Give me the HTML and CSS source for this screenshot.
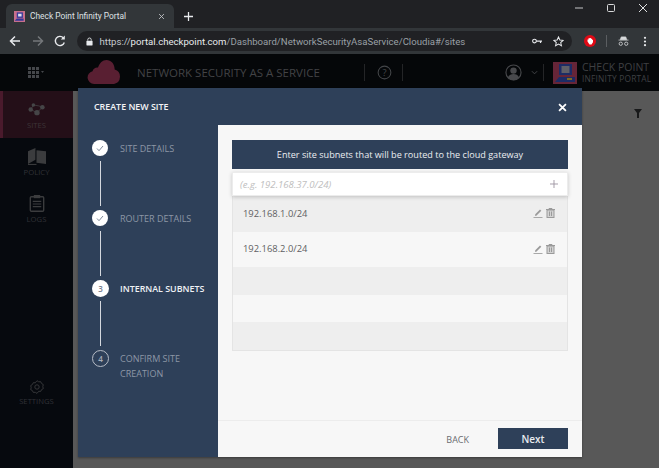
FILE: index.html
```html
<!DOCTYPE html>
<html lang="en">
<head>
<meta charset="utf-8">
<title>Check Point Infinity Portal</title>
<link rel="stylesheet" href="styles.css">
</head>
<body>
<div class="browser">
  <div class="tabstrip">
    <div class="tab">
      <svg class="favicon" viewBox="0 0 16 16"><rect width="16" height="16" fill="#c8708c"/><rect x="4" y="2" width="9" height="8" fill="#3a3c9c"/><rect x="6" y="4" width="5" height="4" fill="#dfe0ee"/><path d="M1 14l3-3h10v3z" fill="#33359a"/></svg>
      <span class="tab-title">Check Point Infinity Portal</span>
      <svg class="tab-close" viewBox="0 0 10 10"><path d="M1.500 1.500l7 7M8.500 1.500l-7 7" stroke="#bfc1c4" stroke-width="1.300"/></svg>
    </div>
    <svg class="newtab" viewBox="0 0 10 10"><path d="M5 0v10M0 5h10" stroke="#e8eaed" stroke-width="1.400"/></svg>
    <div class="winctrls">
      <svg viewBox="0 0 10 10"><path d="M1 5h8" stroke="#c4c6c8" stroke-width="1"/></svg>
      <svg viewBox="0 0 10 10"><rect x="1.500" y="1.500" width="7" height="7" rx="1" fill="none" stroke="#d8d9da" stroke-width="1"/></svg>
      <svg viewBox="0 0 10 10"><path d="M1 1l8 8M9 1l-8 8" stroke="#e0e1e2" stroke-width="1"/></svg>
    </div>
  </div>
  <div class="toolbar">
    <svg class="nav" viewBox="0 0 12 12"><path d="M11 6H2M6 1.500L1.500 6 6 10.500" fill="none" stroke="#e8eaed" stroke-width="1.500"/></svg>
    <svg class="nav" viewBox="0 0 12 12"><path d="M1 6h9M6 1.500L10.500 6 6 10.500" fill="none" stroke="#74777a" stroke-width="1.500"/></svg>
    <svg class="nav" viewBox="0 0 12 12"><path d="M10.300 7.500A4.600 4.600 0 1 1 9.300 2.800" fill="none" stroke="#e8eaed" stroke-width="1.400"/><path d="M10.800 0.500v4h-4z" fill="#e8eaed"/></svg>
    <div class="omnibox">
      <svg class="lock" viewBox="0 0 8 10"><path d="M2 4V3a2 2 0 0 1 4 0v1" fill="none" stroke="#e8eaed" stroke-width="1"/><rect x="0.500" y="4" width="7" height="5.500" rx="0.500" fill="#e8eaed"/></svg>
      <span class="url"><span class="url-dim">https://</span><span class="url-host">portal.checkpoint.com</span><span class="url-dim">/Dashboard/NetworkSecurityAsaService/Cloudia#/sites</span></span>
      <svg class="key" viewBox="0 0 12 7"><circle cx="3" cy="3.500" r="2.200" fill="none" stroke="#e8eaed" stroke-width="1.300"/><path d="M5 3h7v1.500h-1V6H9.500V4.500H5z" fill="#e8eaed"/></svg>
      <svg class="star" viewBox="0 0 12 12"><path d="M6 1l1.500 3.300 3.600.4-2.700 2.400.8 3.500L6 8.800l-3.200 1.800.8-3.500L.9 4.700l3.600-.4z" fill="none" stroke="#e8eaed" stroke-width="1.100"/></svg>
    </div>
    <svg class="ext" viewBox="0 0 12 12"><circle cx="6" cy="6" r="6" fill="#e00a16"/><path d="M3.500 6.500V4.500h1V3.200h1.200V3h1.200v.8H8v1h1v2.500L7.500 9.500h-2z" fill="#fff"/></svg>
    <span class="tb-sep"></span>
    <svg class="incog" viewBox="0 0 12 11"><path d="M2.500 4l1-3h5l1 3zM0.500 4.500h11" fill="#d6d8da" stroke="#d6d8da" stroke-width="0.800"/><circle cx="3" cy="8.500" r="1.800" fill="none" stroke="#d6d8da" stroke-width="0.900"/><circle cx="9" cy="8.500" r="1.800" fill="none" stroke="#d6d8da" stroke-width="0.900"/></svg>
    <svg class="menu" viewBox="0 0 4 12"><circle cx="2" cy="2" r="1.200" fill="#e8eaed"/><circle cx="2" cy="6" r="1.200" fill="#e8eaed"/><circle cx="2" cy="10" r="1.200" fill="#e8eaed"/></svg>
  </div>
</div>

<div class="app">
  <header class="app-header">
    <div class="apps">
      <svg class="apps-icon" viewBox="0 0 17 11"><g fill="#45474b"><rect width="3" height="3"/><rect x="4" width="3" height="3"/><rect x="8" width="3" height="3"/><rect y="4" width="3" height="3"/><rect x="4" y="4" width="3" height="3"/><rect x="8" y="4" width="3" height="3"/><rect y="8" width="3" height="3"/><rect x="4" y="8" width="3" height="3"/><rect x="8" y="8" width="3" height="3"/><path d="M13 4h3l-1.500 2z"/></g></svg>
    </div>
    <svg class="cloud" viewBox="0 0 34 24"><path d="M7 24a6.500 6.500 0 0 1-1.500-12.800C6.500 8 9 7 11 7.500 12.500 3 15.500 0 19.500 0c4.500 0 8 3.500 8.200 9.500A7.500 7.500 0 0 1 27 24z" fill="#591f32"/></svg>
    <span class="product">NETWORK SECURITY AS A SERVICE</span>
    <span class="h-sep h-sep-a"></span>
    <svg class="help" viewBox="0 0 16 16"><circle cx="8" cy="8" r="6.800" fill="none" stroke="#45474a" stroke-width="1.100"/><text x="8" y="11.500" text-anchor="middle" class="help-q">?</text></svg>
    <span class="h-sep"></span>
    <span class="h-grow"></span>
    <svg class="avatar" viewBox="0 0 18 18"><circle cx="9" cy="9" r="8" fill="none" stroke="#48494c" stroke-width="1.200"/><circle cx="9" cy="7" r="3.400" fill="#48494c"/><path d="M3 14.500c1-3 3.500-4 6-4s5 1 6 4a8 8 0 0 1-12 0z" fill="#48494c"/></svg>
    <svg class="chev" viewBox="0 0 8 5"><path d="M1 1l3 3 3-3" fill="none" stroke="#4c4d50" stroke-width="1"/></svg>
    <span class="h-sep h-sep-b"></span>
    <svg class="brand" viewBox="0 0 24 22"><rect width="24" height="22" fill="#662538"/><rect x="6" y="2" width="13" height="11" fill="#1d2c66"/><rect x="8.500" y="4" width="8" height="7" fill="#5f5f68"/><path d="M2 20l4-5h16v5z" fill="#1d2c66"/><rect x="14" y="16" width="5" height="2" fill="#7d6a24"/></svg>
    <div class="brand-text"><div class="brand-1">CHECK POINT</div><div class="brand-2">INFINITY PORTAL</div></div>
  </header>

  <div class="app-body">
    <nav class="sidebar">
      <div class="nav-item nav-active">
        <svg class="nav-ic" viewBox="0 0 20 15"><g fill="#454547"><circle cx="3" cy="7.500" r="2.500"/><circle cx="6" cy="2.500" r="2"/><circle cx="10" cy="11" r="3"/><circle cx="16" cy="5" r="2.500"/></g><path d="M3 7.500L6 2.500 12 3.500 16 5 10 11z" fill="none" stroke="#454547" stroke-width="0.800"/></svg>
        <span>SITES</span>
      </div>
      <div class="nav-item">
        <svg class="nav-ic" viewBox="0 0 17 16"><path d="M0 3l7-3v11l-7 4z" fill="#3b3c3e"/><path d="M8 2l9 1v12l-9-1z" fill="#3b3c3e"/><path d="M0 15.500h8" stroke="#3b3c3e"/></svg>
        <span>POLICY</span>
      </div>
      <div class="nav-item">
        <svg class="nav-ic" viewBox="0 0 14 16"><rect x="0.700" y="1.700" width="12.600" height="13.600" rx="1" fill="none" stroke="#3b3c3e" stroke-width="1.300"/><rect x="4" y="0" width="6" height="3" fill="#3b3c3e"/><path d="M3 6h8M3 8.500h8M3 11h8" stroke="#3b3c3e" stroke-width="1.100"/></svg>
        <span>LOGS</span>
      </div>
      <div class="nav-item nav-settings">
        <svg class="nav-ic" viewBox="0 0 14 14"><path d="M7 .7l1.700 1.100 2-.1.900 1.800 1.700 1.100-.5 2 .5 2-1.700 1-.9 1.800-2-.1L7 13.400l-1.700-1.100-2 .1-.9-1.800-1.700-1 .5-2-.5-2 1.700-1.100.9-1.800 2 .1z" fill="none" stroke="#3a3b3d" stroke-width="0.900"/><circle cx="7" cy="7" r="2.200" fill="none" stroke="#3a3b3d" stroke-width="0.900"/></svg>
        <span>SETTINGS</span>
      </div>
    </nav>
    <main class="backdrop">
      <svg class="filter" viewBox="0 0 8 9"><path d="M0 0h8L5 4v5H3V4z" fill="#18191a"/></svg>
    </main>
  </div>
</div>

<section class="modal">
  <aside class="wizard">
    <h1 class="wizard-title">CREATE NEW SITE</h1>
    <ol class="steps">
      <li class="step done">
        <span class="dot"><svg viewBox="0 0 8 7"><path d="M1 3.500L3 5.700 7 1" fill="none" stroke="#7d8898" stroke-width="1"/></svg></span>
        <span class="step-label">SITE DETAILS</span>
      </li>
      <li class="step done">
        <span class="dot"><svg viewBox="0 0 8 7"><path d="M1 3.500L3 5.700 7 1" fill="none" stroke="#7d8898" stroke-width="1"/></svg></span>
        <span class="step-label">ROUTER DETAILS</span>
      </li>
      <li class="step current">
        <span class="dot">3</span>
        <span class="step-label">INTERNAL SUBNETS</span>
      </li>
      <li class="step todo">
        <span class="dot">4</span>
        <span class="step-label">CONFIRM SITE CREATION</span>
      </li>
    </ol>
  </aside>
  <div class="panel">
    <div class="panel-top">
      <svg class="modal-close" viewBox="0 0 10 10"><path d="M1.200 1.200l7.600 7.600M8.800 1.200l-7.600 7.600" stroke="#fff" stroke-width="2"/></svg>
    </div>
    <div class="panel-main">
      <div class="table-title">Enter site subnets that will be routed to the cloud gateway</div>
      <div class="table-box">
        <div class="add-row">
          <span class="placeholder">(e.g. 192.168.37.0/24)</span>
          <svg class="plus" viewBox="0 0 9 9"><path d="M4.500 0v9M0 4.500h9" stroke="#9b919f" stroke-width="1"/></svg>
        </div>
        <div class="row row-tall row-odd">
          <span>192.168.1.0/24</span>
          <svg class="pencil" viewBox="0 0 10 10"><path d="M2 6.500L7 1.500l1.300 1.300-5 5H2z" fill="#9a9a9a"/><path d="M0.500 9.500h9" stroke="#a8a8a8"/></svg>
          <svg class="trash" viewBox="0 0 9 10"><path d="M0 1.500h9M3 1.500V.5h3v1" fill="none" stroke="#9a9a9a"/><rect x="1" y="2" width="7" height="7.500" fill="#d2d2d2" stroke="#9a9a9a"/><path d="M3.500 3.500v4.500M5.500 3.500v4.500" stroke="#9a9a9a"/></svg>
        </div>
        <div class="row row-tall">
          <span>192.168.2.0/24</span>
          <svg class="pencil" viewBox="0 0 10 10"><path d="M2 6.500L7 1.500l1.300 1.300-5 5H2z" fill="#9a9a9a"/><path d="M0.500 9.500h9" stroke="#a8a8a8"/></svg>
          <svg class="trash" viewBox="0 0 9 10"><path d="M0 1.500h9M3 1.500V.5h3v1" fill="none" stroke="#9a9a9a"/><rect x="1" y="2" width="7" height="7.500" fill="#d2d2d2" stroke="#9a9a9a"/><path d="M3.500 3.500v4.500M5.500 3.500v4.500" stroke="#9a9a9a"/></svg>
        </div>
        <div class="row row-odd"></div>
        <div class="row"></div>
        <div class="row row-odd"></div>
      </div>
    </div>
    <footer class="panel-foot">
      <button class="btn-back" type="button">BACK</button>
      <button class="btn-next" type="button">Next</button>
    </footer>
  </div>
</section>
</body>
</html>
```

FILE: styles.css
```css
* { box-sizing: border-box; }
html, body { margin: 0; padding: 0; }
body {
  width: 659px;
  height: 468px;
  overflow: hidden;
  position: relative;
  font-family: "Open Sans", sans-serif;
  background: #585858;
}

/* browser chrome */
.tabstrip {
  height: 28px;
  background: #202124;
  display: flex;
  align-items: flex-end;
}
.tab {
  margin-left: 6px;
  width: 168px;
  height: 24px;
  background: #323639;
  border-radius: 6px 6px 0 0;
  display: flex;
  align-items: center;
  padding: 0 6px 0 8px;
}
.favicon { width: 11px; height: 11px; flex: none; }
.tab-title {
  margin-left: 5px;
  font: 8.400px "Roboto", sans-serif;
  color: #dfe1e4;
  white-space: nowrap;
  flex: 1;
}
.tab-close { width: 7px; height: 7px; margin-right: 3px; }
.newtab { width: 9px; height: 9px; margin: 0 0 7px 10px; }
.winctrls {
  margin-left: auto;
  align-self: flex-start;
  display: flex;
  gap: 22px;
  padding: 3px 11px 0 0;
}
.winctrls svg { width: 10px; height: 10px; }

.toolbar {
  height: 26px;
  background: #323639;
  display: flex;
  align-items: center;
  padding-left: 9px;
}
.nav { width: 12px; height: 12px; margin-right: 10.500px; }
.omnibox {
  width: 495px;
  height: 20px;
  border-radius: 10px;
  background: #202124;
  display: flex;
  align-items: center;
  padding: 0 8px 0 9px;
}
.lock { width: 7px; height: 9px; flex: none; }
.url {
  margin-left: 7px;
  font: 9.600px "Roboto", sans-serif;
  white-space: nowrap;
  flex: 1;
}
.url-dim { color: #9aa0a6; }
.url-host { color: #e8eaed; }
.url-dim:first-child { color: #c6cace; }
.key { width: 10px; height: 6px; flex: none; margin-right: 11px; }
.star { width: 11px; height: 11px; flex: none; }
.ext { width: 12px; height: 12px; margin-left: 12px; flex: none; }
.tb-sep { width: 1px; height: 12px; background: #5b5e61; margin-left: 10px; }
.incog { width: 11px; height: 10px; margin-left: 11px; flex: none; }
.menu { width: 4px; height: 11px; margin-left: 14px; flex: none; }

/* app */
.app { display: flex; flex-direction: column; height: 414px; }
.app-header {
  height: 37px;
  background: #050709;
  display: flex;
  align-items: center;
  flex: none;
}
.apps { width: 87px; padding-left: 28px; display: flex; }
.apps-icon { width: 17px; height: 11px; }
.cloud { width: 34px; height: 24px; margin-bottom: 1px; flex: none; }
.product {
  margin-left: 16px;
  font-size: 11.500px;
  color: #424346;
  white-space: nowrap;
  width: 190px;
  flex: none;
}
.h-sep { width: 1px; height: 17px; background: #242527; flex: none; }
.h-sep-a { margin-left: 37px; }
.help { width: 15px; height: 15px; margin: 0 10px 0 12px; flex: none; }
.help-q { font: 10px "Open Sans", sans-serif; fill: #47484b; }
.h-grow { flex: 1; }
.avatar { width: 17px; height: 17px; flex: none; }
.chev { width: 7px; height: 5px; margin-left: 9px; flex: none; }
.h-sep-b { margin-left: 5px; }
.brand { width: 24px; height: 22px; margin-left: 9px; flex: none; }
.brand-text { margin: 0 10px 0 5px; width: 67px; flex: none; color: #3f4043; white-space: nowrap; }
.brand-1 { font-size: 10.500px; line-height: 14px; }
.brand-2 { font-size: 8.400px; line-height: 12px; letter-spacing: .2px; margin-top: -1px; }

.app-body { flex: 1; display: flex; min-height: 0; }
.sidebar {
  width: 73px;
  background: #06090e;
  display: flex;
  flex-direction: column;
  flex: none;
}
.nav-item {
  height: 47px;
  display: flex;
  flex-direction: column;
  align-items: center;
  padding-top: 10px;
  font-size: 7.700px;
  line-height: 9px;
  color: #303136;
}
.nav-item span { margin-top: 3px; }
.nav-active {
  background: #240f18;
  border-left: 3px solid #4a1a2c;
  padding-right: 3px;
  color: #3c3437;
}
.nav-ic { width: 18px; height: 17px; }
.nav-settings { margin-top: auto; margin-bottom: 51px; }
.nav-settings .nav-ic { height: 14px; }
.backdrop {
  flex: 1;
  background: #585858;
  display: flex;
  justify-content: flex-end;
  padding: 18px 17px 0 0;
}
.filter { width: 8px; height: 9px; }

/* modal */
.modal {
  position: absolute;
  left: 78px;
  top: 88px;
  width: 504px;
  height: 369px;
  display: flex;
  box-shadow: 0 1px 2px rgba(0, 0, 0, .35);
}
.wizard {
  width: 140px;
  background: #2e4059;
  padding: 13px 0 0 14px;
  flex: none;
}
.wizard-title {
  margin: 0 0 0 2px;
  font-size: 8.900px;
  line-height: 12px;
  font-weight: 600;
  color: #f3f4f6;
  white-space: nowrap;
  height: 39px;
}
.steps { list-style: none; margin: 0; padding: 0; }
.step {
  position: relative;
  height: 70px;
  display: flex;
  align-items: flex-start;
}
.step:not(:last-child)::after {
  content: "";
  position: absolute;
  left: 8px;
  top: 21px;
  bottom: 4px;
  width: 1px;
  background: #d4d8de;
}
.dot {
  width: 16px;
  height: 16px;
  border-radius: 50%;
  background: #fff;
  display: flex;
  align-items: center;
  justify-content: center;
  font-size: 8px;
  font-weight: 600;
  color: #76808f;
  flex: none;
}
.dot svg { width: 8px; height: 7px; }
.current .dot { width: 17px; height: 17px; }
.todo .dot { background: transparent; border: 1px solid #b6bcc6; color: #a8aeb8; width: 17px; height: 17px; }
.step-label {
  margin: 1px 0 0 12px;
  font-size: 9px;
  line-height: 15px;
  color: #8d97a6;
  width: 90px;
}
.current .step-label { margin-left: 11px; color: #eef1f5; font-weight: 600; font-size: 8.900px; white-space: nowrap; }
.todo .step-label { margin-left: 11px; }

.panel {
  flex: 1;
  background: #f7f7f7;
  display: flex;
  flex-direction: column;
}
.panel-top {
  height: 37px;
  background: #2e4059;
  display: flex;
  align-items: center;
  justify-content: flex-end;
  padding: 1px 15px 0 0;
  flex: none;
}
.modal-close { width: 9px; height: 9px; }
.panel-main { flex: 1; padding: 15px 14px 0; }
.table-title {
  height: 29px;
  background: #2e4059;
  color: #eceef1;
  font-size: 9.100px;
  line-height: 29px;
  text-align: center;
  white-space: nowrap;
}
.table-box {
  margin-top: 3px;
  border: 1px solid #e4e4e4;
  border-top: 0;
}
.add-row {
  height: 24px;
  margin: 0 -1px;
  background: #fff;
  border: 1px solid #ececec;
  box-shadow: 0 1px 4px rgba(0, 0, 0, .2);
  display: flex;
  align-items: center;
  justify-content: space-between;
  padding: 0 9px 0 7px;
  position: relative;
}
.placeholder { font-size: 9.600px; font-style: italic; color: #c0c0c0; }
.plus { width: 8px; height: 8px; }
.row {
  height: 27.600px;
  background: #f7f7f7;
  display: flex;
  align-items: center;
  padding: 0 12px 0 10px;
  font-size: 9.400px;
  color: #5f5f63;
}
.row span { flex: 1; }
.row-odd { background: #eeeeee; }
.row-tall { height: 35.500px; padding-bottom: 1px; }
.pencil { width: 10px; height: 10px; flex: none; }
.trash { width: 9px; height: 10px; margin-left: 3px; flex: none; }

.panel-foot {
  height: 37px;
  border-top: 1px solid #ececec;
  display: flex;
  align-items: flex-start;
  justify-content: flex-end;
  padding: 7px 14px 0 0;
  flex: none;
}
button { font-family: inherit; border: 0; padding: 0; cursor: pointer; }
.btn-back { background: transparent; color: #6a6c70; font-size: 9px; margin: 5px 29px 0 0; }
.btn-next {
  width: 70px;
  height: 21px;
  background: #2e4059;
  color: #e8ebef;
  font-size: 10px;
  font-weight: 600;
}
```
